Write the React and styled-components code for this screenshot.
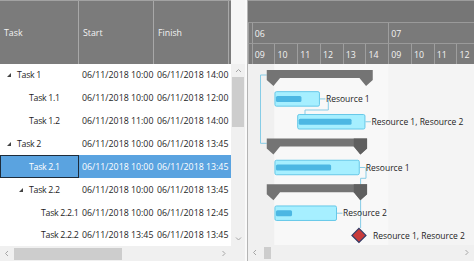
import React from 'react';
import styled, { createGlobalStyle } from 'styled-components';

const GlobalStyle = createGlobalStyle`
  html, body {
    margin: 0;
    padding: 0;
    background: #fff;
    overflow: hidden;
  }
  body {
    font-family: 'Open Sans', 'Noto Sans', 'DejaVu Sans', sans-serif;
  }
`;

// timeline scale: 09:00 of day 06 sits at x = 251.7 of the page
const ROW_H = 22.86;
const HOUR_W = 22.75;
const ORIGIN = 251.7;
const BODY_TOP = 64.6;

const xOf = (h) => ORIGIN + (h - 9) * HOUR_W;
const rowTop = (i) => BODY_TOP + i * ROW_H;

const tasks = [
  { name: 'Task 1', level: 0, parent: true, start: '06/11/2018 10:00', finish: '06/11/2018 14:00', kind: 'summary', from: 10, to: 14 },
  { name: 'Task 1.1', level: 1, start: '06/11/2018 10:00', finish: '06/11/2018 12:00', kind: 'task', from: 10, to: 12, progress: 0.6, label: 'Resource 1' },
  { name: 'Task 1.2', level: 1, start: '06/11/2018 11:00', finish: '06/11/2018 14:00', kind: 'task', from: 11, to: 14, progress: 0.81, label: 'Resource 1, Resource 2' },
  { name: 'Task 2', level: 0, parent: true, start: '06/11/2018 10:00', finish: '06/11/2018 13:45', kind: 'summary', from: 10, to: 13.75, shade: true },
  { name: 'Task 2.1', level: 1, selected: true, start: '06/11/2018 10:00', finish: '06/11/2018 13:45', kind: 'task', from: 10, to: 13.75, progress: 0.67, label: 'Resource 1' },
  { name: 'Task 2.2', level: 1, parent: true, start: '06/11/2018 10:00', finish: '06/11/2018 13:45', kind: 'summary', from: 10, to: 13.75, shade: true },
  { name: 'Task 2.2.1', level: 2, start: '06/11/2018 10:00', finish: '06/11/2018 12:45', kind: 'task', from: 10, to: 12.75, progress: 0.27, label: 'Resource 2' },
  { name: 'Task 2.2.2', level: 2, start: '06/11/2018 13:45', finish: '06/11/2018 13:45', kind: 'milestone', from: 13.75, to: 13.75, label: 'Resource 1, Resource 2' },
];

const Shell = styled.div`
  display: flex;
  width: 474px;
  height: 261px;
  overflow: hidden;
  font-size: 8.8px;
  color: #1e1e1e;
`;

/* ---------- left grid ---------- */

const LeftPane = styled.div`
  flex: none;
  width: 245px;
  display: grid;
  grid-template-columns: 231px 14px;
  grid-template-rows: 64px 182px 15px;
`;

const GridHeader = styled.div`
  display: grid;
  grid-template-columns: 79px 75px 75px 2px;
  background: #7b7b7b;
  border-top: 1px solid #a2a2a2;
  color: #f3f3f3;
`;

const HeaderCell = styled.div`
  display: flex;
  align-items: center;
  padding-left: 4px;
  border-right: 1px solid #a8a8a8;
  &:last-child {
    border-right: none;
  }
`;

const HeaderCorner = styled.div`
  background: #f6f6f6;
`;

const Rows = styled.div`
  overflow: hidden;
  background: #fff;
`;

const Row = styled.div`
  display: grid;
  grid-template-columns: 79px 75px 75px;
  height: ${ROW_H}px;
  background: ${(p) => (p.$selected ? '#5aa3e0' : 'transparent')};
  color: ${(p) => (p.$selected ? '#fff' : '#1e1e1e')};
`;

const Cell = styled.div`
  display: flex;
  align-items: center;
  padding-left: 3px;
  white-space: nowrap;
  overflow: hidden;
`;

const TaskCell = styled(Cell)`
  padding-left: ${(p) => 4 + p.$level * 12}px;
  box-sizing: border-box;
  letter-spacing: -0.3px;
  overflow: visible;
  border: 1px solid ${(p) => (p.$focused ? '#1d2c3b' : 'transparent')};
`;

const Toggle = styled.span`
  flex: none;
  width: 12px;
  display: flex;
  align-items: center;
  padding-left: 2px;
  box-sizing: border-box;
`;

const VScroll = styled.div`
  display: flex;
  flex-direction: column;
  background: #f0f0f0;
`;

const HScroll = styled.div`
  display: flex;
  background: #f0f0f0;
`;

const ArrowBox = styled.div`
  flex: none;
  width: 14px;
  height: 14px;
  display: flex;
  align-items: center;
  justify-content: center;
`;

const Track = styled.div`
  flex: 1;
  display: flex;
  flex-direction: ${(p) => (p.$vertical ? 'column' : 'row')};
  align-items: center;
`;

const Thumb = styled.div`
  flex: none;
  background: #cdcdcd;
  width: ${(p) => (p.$vertical ? '12px' : `${p.$size}px`)};
  height: ${(p) => (p.$vertical ? `${p.$size}px` : '12px')};
  margin-left: ${(p) => (p.$vertical ? 0 : p.$offset)}px;
  margin-top: ${(p) => (p.$vertical ? p.$offset : 0)}px;
`;

const Corner = styled.div`
  background: #f0f0f0;
`;

const Splitter = styled.div`
  flex: none;
  width: 2px;
  background: #fafafa;
  border-right: 1px solid #b4b4b4;
`;

/* ---------- gantt ---------- */

const RightPane = styled.div`
  flex: 1;
  min-width: 0;
  display: grid;
  grid-template-rows: 64px 181px 16px;
  overflow: hidden;
`;

const TimeHeader = styled.div`
  display: flex;
  flex-direction: column;
  background: #7a7a7a;
  border-top: 1px solid #9c9c9c;
  color: #f3f3f3;
  overflow: hidden;
`;

const TopBand = styled.div`
  height: 21px;
  background: #767676;
  border-bottom: 1px solid #9a9a9a;
`;

const ScaleRow = styled.div`
  display: flex;
  height: ${(p) => p.$h}px;
  border-bottom: ${(p) => (p.$last ? 'none' : '1px solid #9a9a9a')};
  white-space: nowrap;
`;

const ScaleCell = styled.div`
  flex: none;
  box-sizing: border-box;
  border-left: 1px solid #9e9e9e;
  padding: 5px 0 0 2px;
  overflow: hidden;
`;

const ChartBody = styled.div`
  overflow: hidden;
  background: #f6f6f6;
  svg {
    display: block;
  }
`;

const chev = {
  up: '1,4 3.5,1.5 6,4',
  down: '1,1.5 3.5,4 6,1.5',
  left: '4,1 1.5,3.5 4,6',
  right: '1.5,1 4,3.5 1.5,6',
};

function Chevron({ dir }) {
  return (
    <ArrowBox>
      <svg width="7" height="7" viewBox="0 0 7 7">
        <polyline points={chev[dir]} fill="none" stroke="#a6a6a6" strokeWidth="1" />
      </svg>
    </ArrowBox>
  );
}

function Expander() {
  return (
    <svg width="4" height="4" viewBox="0 0 4 4">
      <polygon points="4,0 4,4 0,4" fill="#444" />
    </svg>
  );
}

const LINE = '#86cce6';

function SummaryBar({ t, i }) {
  const x1 = xOf(t.from) - 7.7;
  const x2 = xOf(t.to) + 7.3;
  const y = rowTop(i) + 5.4;
  const d = `M${x1} ${y} H${x2} V${y + 10} L${x2 - 6.7} ${y + 16} L${x2 - 13.3} ${y + 8} H${x1 + 13.3} L${x1 + 6.7} ${y + 16} L${x1} ${y + 10} Z`;
  return (
    <g>
      <path d={d} fill="#747474" />
      {t.shade && (
        <path
          d={`M${x2 - 13.3} ${y} H${x2} V${y + 10} L${x2 - 6.7} ${y + 16} L${x2 - 13.3} ${y + 8} Z`}
          fill="#5f5f5f"
        />
      )}
    </g>
  );
}

function TaskBar({ t, i }) {
  const x1 = xOf(t.from);
  const x2 = xOf(t.to);
  const y = rowTop(i) + 4.2;
  const h = 14.5;
  const cy = y + h / 2;
  const w = x2 - x1;
  return (
    <g>
      <line x1={x2} y1={cy} x2={x2 + 5.5} y2={cy} stroke={LINE} strokeWidth="1" />
      <rect x={x1 + 0.5} y={y} width={w - 1} height={h} rx="1.5" fill="#a6efff" stroke="#66c8e8" strokeWidth="1" />
      <rect x={x1 + 1.5} y={cy - 3} width={(w - 3) * t.progress} height="6" rx="1.5" fill="#4cb7e3" />
      <text x={x2 + 6} y={cy + 3.2} fontSize="8.5" fill="#1e1e1e">{t.label}</text>
    </g>
  );
}

function Milestone({ t, i }) {
  const cx = xOf(t.from) - 0.8;
  const cy = rowTop(i) + 10.8;
  const r = 7;
  return (
    <g>
      <polygon
        points={`${cx},${cy - r} ${cx + r},${cy} ${cx},${cy + r} ${cx - r},${cy}`}
        fill="#c83b3b"
        stroke="#2e3a66"
        strokeWidth="1.2"
      />
      <text x={cx + 14} y={cy + 3.2} fontSize="8.5" fill="#1e1e1e">{t.label}</text>
    </g>
  );
}

function Chart() {
  return (
    <svg width="226" height="181" viewBox="248 64 226 181">
      <rect x="248" y="64" width={xOf(10) - 248} height="181" fill="#f0f0f0" />
      <rect x={xOf(10)} y="64" width={xOf(15) - xOf(10)} height="181" fill="#f8f8f8" />
      <rect x={xOf(15)} y="64" width={474 - xOf(15)} height="181" fill="#f4f4f4" />

      <polyline points="266.7,75 260.5,75 260.5,143.3 266.7,143.3" fill="none" stroke={LINE} strokeWidth="1" />
      <polyline points="328.3,99.4 328.3,110 305,110 305,114.6" fill="none" stroke={LINE} strokeWidth="1" />
      <polyline points="366,167.5 366,178.3 360.6,178.3 360.6,228" fill="none" stroke={LINE} strokeWidth="1" />

      {tasks.map((t, i) => {
        if (t.kind === 'summary') return <SummaryBar key={t.name} t={t} i={i} />;
        if (t.kind === 'task') return <TaskBar key={t.name} t={t} i={i} />;
        return <Milestone key={t.name} t={t} i={i} />;
      })}
    </svg>
  );
}

export default function App() {
  const hours = [9, 10, 11, 12, 13, 14, 9, 10, 11, 12];
  return (
    <>
      <GlobalStyle />
      <Shell>
        <LeftPane>
          <GridHeader>
            <HeaderCell>Task</HeaderCell>
            <HeaderCell>Start</HeaderCell>
            <HeaderCell>Finish</HeaderCell>
            <HeaderCell />
          </GridHeader>
          <HeaderCorner />

          <Rows>
            {tasks.map((t) => (
              <Row key={t.name} $selected={t.selected}>
                <TaskCell $level={t.level} $focused={t.selected}>
                  <Toggle>{t.parent && <Expander />}</Toggle>
                  {t.name}
                </TaskCell>
                <Cell>{t.start}</Cell>
                <Cell>{t.finish}</Cell>
              </Row>
            ))}
          </Rows>
          <VScroll>
            <Chevron dir="up" />
            <Track $vertical>
              <Thumb $vertical $size={50} $offset={-1} />
            </Track>
            <Chevron dir="down" />
          </VScroll>

          <HScroll>
            <Chevron dir="left" />
            <Track>
              <Thumb $size={108} $offset={0} />
            </Track>
            <Chevron dir="right" />
          </HScroll>
          <Corner />
        </LeftPane>

        <Splitter />

        <RightPane>
          <TimeHeader>
            <TopBand />
            <ScaleRow $h={21}>
              <ScaleCell style={{ width: 3.7 }} />
              <ScaleCell style={{ width: HOUR_W * 6 }}>06</ScaleCell>
              <ScaleCell style={{ width: HOUR_W * 6 }}>07</ScaleCell>
            </ScaleRow>
            <ScaleRow $h={20} $last>
              <ScaleCell style={{ width: 3.7 }} />
              {hours.map((h, k) => (
                <ScaleCell key={k} style={{ width: HOUR_W }}>
                  {String(h).padStart(2, '0')}
                </ScaleCell>
              ))}
            </ScaleRow>
          </TimeHeader>

          <ChartBody>
            <Chart />
          </ChartBody>

          <HScroll>
            <Chevron dir="left" />
            <Track>
              <Thumb $size={7} $offset={2} />
            </Track>
            <Chevron dir="right" />
          </HScroll>
        </RightPane>
      </Shell>
    </>
  );
}
